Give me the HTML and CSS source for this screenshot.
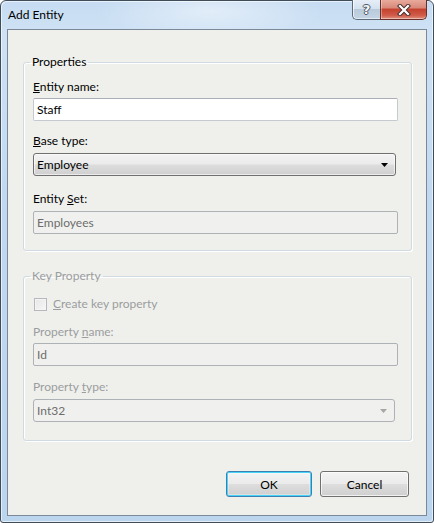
FILE: index.html
```html
<!DOCTYPE html>
<html>
<head>
<meta charset="utf-8">
<link rel="stylesheet" href="styles.css">
</head>
<body>
<div class="window">
  <div class="titlebar">
    <span class="title">Add Entity</span>
    <div class="caption-btns">
      <div class="cbtn help"><span class="qmark">?</span></div>
      <div class="cbtn close">
        <svg width="14" height="12" viewBox="0 0 14 12">
          <path d="M3 2 L11 10 M11 2 L3 10" stroke="#4a3030" stroke-width="4.2" stroke-linecap="square" fill="none"/>
          <path d="M3 2 L11 10 M11 2 L3 10" stroke="#ffffff" stroke-width="2.2" stroke-linecap="square" fill="none"/>
        </svg>
      </div>
    </div>
  </div>
  <div class="client">
    <fieldset class="group">
      <legend>Properties</legend>
      <div class="lbl"><u>E</u>ntity name:</div>
      <div class="textbox">Staff</div>
      <div class="lbl gap-b"><u>B</u>ase type:</div>
      <div class="combo">
        <span>Employee</span>
        <svg class="arrow" width="7" height="4" viewBox="0 0 7 4"><path d="M0 0 H7 L3.5 4 Z" fill="#000"/></svg>
      </div>
      <div class="lbl gap-c">Entity <u>S</u>et:</div>
      <div class="textbox disabled">Employees</div>
    </fieldset>

    <fieldset class="group group-off">
      <legend>Key Property</legend>
      <div class="checkrow">
        <span class="checkbox"></span>
        <span class="checktext"><u>C</u>reate key property</span>
      </div>
      <div class="lbl off gap-d">Property <u>n</u>ame:</div>
      <div class="textbox disabled">Id</div>
      <div class="lbl off gap-e">Property <u>t</u>ype:</div>
      <div class="combo disabled">
        <span>Int32</span>
        <svg class="arrow" width="7" height="4" viewBox="0 0 7 4"><path d="M0 0 H7 L3.5 4 Z" fill="#a6a6a6"/></svg>
      </div>
    </fieldset>

    <div class="buttons">
      <div class="btn default">OK</div>
      <div class="btn">Cancel</div>
    </div>
  </div>
</div>
</body>
</html>
```

FILE: styles.css
```css
* { box-sizing: border-box; }

body {
  margin: 0;
  background: #ffffff;
  font-family: "Lato", "Noto Sans", sans-serif;
  font-size: 12px;
  color: #000;
}

.window {
  width: 434px;
  height: 523px;
  display: flex;
  flex-direction: column;
  border: 1px solid #3f4c5a;
  border-radius: 6px 6px 3px 3px;
  padding: 0 6px 6px 6px;
  background:
    radial-gradient(ellipse 160px 40px at 210px 10px, rgba(255,255,255,0.45), rgba(255,255,255,0) 70%),
    linear-gradient(180deg, #c6dcf2 0%, #cfe2f5 6%, #c0d8f0 40%, #bcd5ee 100%);
  box-shadow: inset 1px 1px 0 rgba(255,255,255,0.6), inset -1px -1px 0 rgba(255,255,255,0.6);
}

.titlebar {
  height: 28px;
  display: flex;
  justify-content: space-between;
  align-items: flex-start;
  flex-shrink: 0;
}

.title {
  margin-top: 6px;
  padding-left: 1px;
  line-height: 16px;
  font-size: 12px;
  color: #000;
}

.caption-btns {
  display: flex;
  margin-top: -1px;
}

.cbtn {
  height: 20px;
  display: flex;
  align-items: center;
  justify-content: center;
  border: 1px solid #5d6b7c;
  border-top: none;
}

.help {
  width: 28px;
  border-radius: 0 0 0 5px;
  border-right: none;
  background: linear-gradient(180deg, #e6eef7 0%, #d5e2ef 45%, #b9cadb 50%, #c5d5e5 100%);
  box-shadow: inset 1px 0 0 rgba(255,255,255,0.7), inset 0 -1px 0 rgba(255,255,255,0.5);
}

.qmark {
  font-family: "DejaVu Sans", sans-serif;
  font-weight: bold;
  font-size: 13px;
  line-height: 14px;
  color: #f4f6f8;
  text-shadow: 1px 0 0 #4c5866, -1px 0 0 #4c5866, 0 1px 0 #4c5866, 0 -1px 0 #4c5866;
}

.close {
  width: 47px;
  border-radius: 0 0 5px 0;
  border-color: #6a2e28;
  background: linear-gradient(180deg, #e8aa9c 0%, #d98a7a 40%, #c4432f 50%, #d05a48 80%, #e09080 100%);
  box-shadow: inset 0 -1px 0 rgba(255,255,255,0.4), inset 1px 0 0 rgba(255,255,255,0.35);
}

.client {
  flex: 1;
  display: flex;
  flex-direction: column;
  border: 1px solid #7a8898;
  background: #eff0ec;
  padding: 0 14px 18px 15px;
}

.group {
  margin: 24px 0 0 0;
  padding: 9px 13px 16px 9px;
  border: 1px solid #d0dae3;
  border-radius: 3px;
  box-shadow: inset 1px 1px 0 #ffffff, 1px 1px 0 #ffffff;
  min-width: 0;
}

.group-off {
  margin-top: 17px;
  padding: 12px 13px 18px 9px;
}

legend {
  padding: 0 2px;
  margin-left: -3px;
  line-height: 16px;
  font-size: 12px;
  color: #000;
}

.group-off legend { color: #9b9d9f; }

.lbl {
  line-height: 16px;
  margin-bottom: 3px;
}

.gap-b { margin-top: 12px; margin-bottom: 4px; }
.gap-c { margin-top: 15px; margin-bottom: 4px; }
.gap-d { margin-top: 12px; margin-bottom: 3px; }
.gap-e { margin-top: 13px; margin-bottom: 4px; }

.lbl.off { color: #9b9d9f; }

.textbox {
  height: 23px;
  line-height: 21px;
  padding-left: 3px;
  border: 1px solid #c5c9d0;
  border-top-color: #a9adb5;
  border-radius: 2px;
  background: #ffffff;
}

.textbox.disabled {
  border-color: #aeb2b6;
  background: #f0f1ee;
  color: #6d6d6d;
}

.combo {
  height: 23px;
  margin-right: 2px;
  display: flex;
  align-items: center;
  justify-content: space-between;
  padding: 0 7px 0 3px;
  border: 1px solid #707070;
  border-radius: 3px;
  background: linear-gradient(180deg, #f3f3f3 0%, #ebebeb 48%, #dddddd 52%, #cfcfcf 100%);
  box-shadow: inset 0 0 0 1px rgba(255,255,255,0.6);
}

.combo.disabled {
  margin-right: 3px;
  border-color: #aeb2b6;
  background: #f0f1ee;
  box-shadow: none;
  color: #6d6d6d;
}

.checkrow {
  display: flex;
  align-items: center;
  height: 16px;
  padding-left: 1px;
}

.checkbox {
  width: 13px;
  height: 13px;
  border: 1px solid #b5b8bc;
  background: linear-gradient(135deg, #e6e7e8 0%, #f6f6f6 100%);
  box-shadow: inset 0 0 0 1px #f4f4f4;
}

.checktext {
  margin-left: 6px;
  line-height: 16px;
  color: #9b9d9f;
}

.buttons {
  margin-top: auto;
  display: flex;
  justify-content: flex-end;
  gap: 8px;
  margin-right: 3px;
}

.btn {
  height: 26px;
  display: flex;
  align-items: center;
  justify-content: center;
  border: 1px solid #707070;
  border-radius: 3px;
  background: linear-gradient(180deg, #f3f3f3 0%, #ebebeb 48%, #dddddd 52%, #cfcfcf 100%);
  box-shadow: inset 0 0 0 1px rgba(255,255,255,0.7);
  width: 89px;
}

.btn.default {
  width: 86px;
  border-color: #3c7fb1;
  box-shadow: inset 0 0 0 1px #48d4f9, inset 0 0 0 2px rgba(255,255,255,0.3);
}
```
